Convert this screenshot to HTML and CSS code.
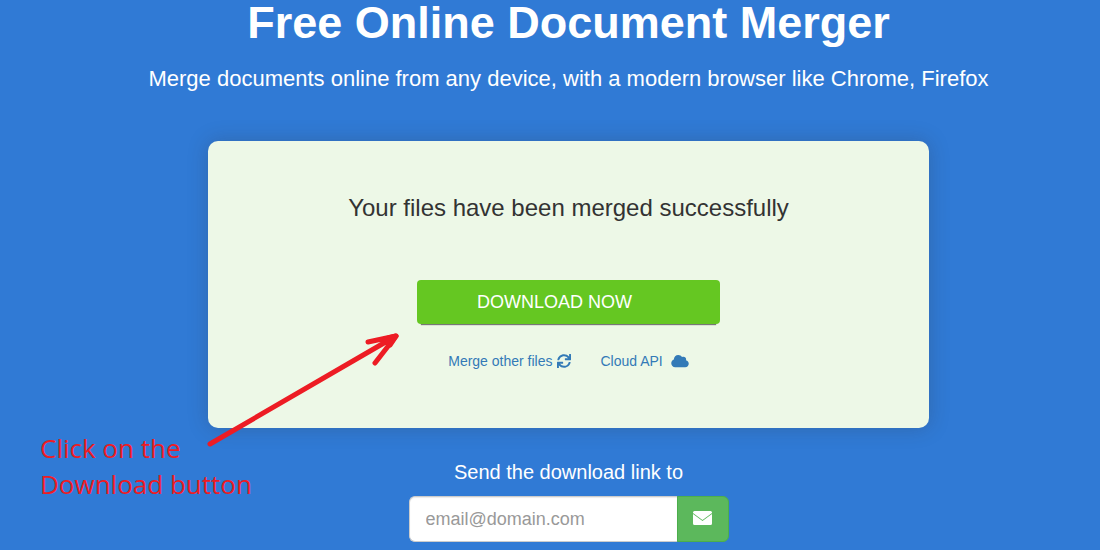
FILE: index.html
```html
<!DOCTYPE html>
<html lang="en">
  <head>
    <meta charset="UTF-8" />
    <meta name="viewport" content="width=device-width, initial-scale=1.0" />
    <title>Free Online Document Merger</title>
    <link rel="stylesheet" href="styles.css">
  </head>
  <body>
    <main class="merger">
      <h1>Free Online Document Merger</h1>
      <p class="subtitle">Merge documents online from any device, with a modern browser like Chrome, Firefox</p>

      <section class="card">
        <h2>Your files have been merged successfully</h2>
        <button class="download" type="button">DOWNLOAD NOW</button>
        <div class="links">
          <a href="#">Merge other files
            <svg class="icon-refresh" viewBox="0 0 512 512" aria-hidden="true">
              <path d="M440.65 12.57l4 82.77A247.16 247.16 0 0 0 255.83 8C134.73 8 33.91 94.92 12.29 209.82A12 12 0 0 0 24.09 224h49.05a12 12 0 0 0 11.67-9.26 175.91 175.91 0 0 1 317-56.94l-101.46-4.86a12 12 0 0 0-12.57 12v47.41a12 12 0 0 0 12 12H500a12 12 0 0 0 12-12V12a12 12 0 0 0-12-12h-47.37a12 12 0 0 0-11.98 12.57zM255.83 432a175.61 175.61 0 0 1-146-77.8l101.8 4.87a12 12 0 0 0 12.57-12v-47.4a12 12 0 0 0-12-12H12a12 12 0 0 0-12 12V500a12 12 0 0 0 12 12h47.35a12 12 0 0 0 12-12.6l-4.15-82.57A247.17 247.17 0 0 0 255.83 504c121.11 0 221.93-86.92 243.55-201.82a12 12 0 0 0-11.8-14.18h-49.05a12 12 0 0 0-11.67 9.26A175.86 175.86 0 0 1 255.83 432z"/>
            </svg>
          </a>
          <a href="#">Cloud API
            <svg class="icon-cloud" viewBox="0 0 640 512" aria-hidden="true">
              <path d="M537.600 226.600c4.100-10.700 6.400-22.400 6.400-34.600 0-53-43-96-96-96-19.700 0-38.100 6-53.300 16.200C367 64.200 315.300 32 256 32c-88.400 0-160 71.600-160 160 0 2.700.1 5.400.2 8.100C40.200 219.800 0 273.200 0 336c0 79.500 64.500 144 144 144h368c70.700 0 128-57.300 128-128 0-61.900-44-113.600-102.400-125.400z"/>
            </svg>
          </a>
        </div>
      </section>

      <form class="send">
        <label for="email">Send the download link to</label>
        <div class="input-group">
          <input id="email" type="email" placeholder="email@domain.com" />
          <button type="button" aria-label="Send">
            <svg class="icon-mail" viewBox="0 0 19 14" aria-hidden="true">
              <path d="M1.500 0h16Q19 0 19 1.500V2L9.500 9 0 2V1.500Q0 0 1.500 0z"/>
              <path d="M0 3L9.500 10 19 3V12.500Q19 14 17.500 14H1.500Q0 14 0 12.500z"/>
            </svg>
          </button>
        </div>
      </form>
    </main>

    <!-- hint drawn over the page -->
    <p class="hint">Click on the<br>Download button</p>
    <svg class="arrow" viewBox="0 0 200 120" aria-hidden="true">
      <path d="M6 114L192 6M164 12L192 6L171 33"/>
      <path class="tip" d="M192 6L181 9L186 15z"/>
    </svg>
  </body>
</html>
```

FILE: styles.css
```css
* {
  box-sizing: border-box;
}

body {
  position: relative;
  margin: 0;
  min-height: 100vh;
  background-color: #307ad5;
  font-family: "Liberation Sans", Arial, sans-serif;
  color: #fff;
}

.merger {
  display: flex;
  flex-flow: column nowrap;
  align-items: center;
  padding-left: 37px;
  padding-bottom: 8px;
  text-align: center;
}

h1 {
  margin: 0;
  font-size: 45px;
  line-height: 46px;
}

.subtitle {
  margin: 21px 0 50px;
  font-size: 22px;
  line-height: 24px;
}

.card {
  display: flex;
  flex-flow: column nowrap;
  align-items: center;
  width: 100%;
  max-width: 721px;
  padding: 54px 16px 57px;
  border-radius: 10px;
  background-color: #edf8e7;
  box-shadow: 0 0 20px rgba(51, 51, 51, 0.25);
}

h2 {
  margin: 0 0 59px;
  font-size: 24px;
  font-weight: normal;
  line-height: 26px;
  color: #333;
}

.download {
  width: 303px;
  height: 44px;
  padding: 0 28px 0 0;
  border: none;
  border-radius: 4px;
  background-color: #65c722;
  box-shadow: 0 5px 1px -4px #777;
  font-family: inherit;
  font-size: 18px;
  color: #fff;
}

.links {
  display: flex;
  gap: 30px;
  margin-top: 27px;
  font-size: 14px;
  line-height: 20px;
}

.links a {
  display: flex;
  align-items: center;
  gap: 4px;
  color: #337ab7;
  text-decoration: none;
}

.links a:last-child {
  gap: 8px;
}

.links svg {
  height: 14px;
  fill: #337ab7;
}

.icon-refresh {
  width: 14px;
}

.icon-cloud {
  width: 18px;
}

.send {
  margin-top: 33px;
}

.send label {
  display: block;
  margin-bottom: 13px;
  font-size: 20px;
  line-height: 22px;
}

.input-group {
  display: flex;
  width: 320px;
  height: 46px;
}

.input-group input {
  flex: 1;
  min-width: 0;
  padding: 10px 16px;
  border: 1px solid #ccc;
  border-right: none;
  border-radius: 6px 0 0 6px;
  background-color: #fff;
  box-shadow: inset 0 1px 1px rgba(0, 0, 0, 0.08);
  font-family: inherit;
  font-size: 18px;
}

.input-group input::placeholder {
  color: #999;
}

.input-group button {
  display: flex;
  align-items: center;
  justify-content: center;
  width: 52px;
  padding: 0 0 2px;
  border: 1px solid #4cae4c;
  border-radius: 0 6px 6px 0;
  background-color: #5cb85c;
}

.icon-mail {
  width: 19px;
  height: 14px;
  fill: #fff;
}

.hint {
  position: absolute;
  top: 430px;
  left: 40px;
  margin: 0;
  font-family: "Segoe UI", "Open Sans", sans-serif;
  font-size: 26px;
  line-height: 36px;
  color: #ed1c24;
}

.arrow {
  position: absolute;
  top: 330px;
  left: 204px;
  width: 200px;
  height: 120px;
  fill: none;
  stroke: #ed1c24;
  stroke-width: 5;
  stroke-linecap: round;
  stroke-linejoin: round;
}

.arrow .tip {
  fill: #ed1c24;
}
```
